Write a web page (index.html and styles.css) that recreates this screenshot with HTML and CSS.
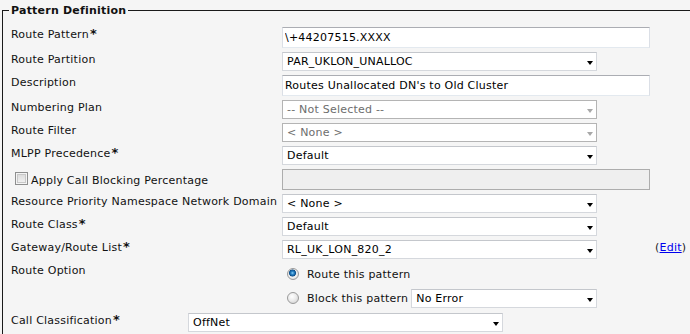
FILE: index.html
```html
<!DOCTYPE html>
<html lang="en">
<head>
<meta charset="utf-8">
<title>Pattern Definition</title>
<link rel="stylesheet" href="styles.css">
</head>
<body>
<fieldset class="panel">
  <legend class="legend">Pattern Definition</legend>
  <div class="form">
    <div class="row row-tall">
      <div class="lbl">Route Pattern<span class="req">*</span></div>
      <div class="ctl"><input class="text" type="text" value="\+44207515.XXXX"></div>
    </div>
    <div class="row">
      <div class="lbl">Route Partition</div>
      <div class="ctl"><div class="select"><span class="val">PAR_UKLON_UNALLOC</span></div></div>
    </div>
    <div class="row row-tall">
      <div class="lbl">Description</div>
      <div class="ctl"><input class="text" type="text" value="Routes Unallocated DN's to Old Cluster"></div>
    </div>
    <div class="row">
      <div class="lbl">Numbering Plan</div>
      <div class="ctl"><div class="select disabled"><span class="val">-- Not Selected --</span></div></div>
    </div>
    <div class="row">
      <div class="lbl">Route Filter</div>
      <div class="ctl"><div class="select disabled"><span class="val">&lt; None &gt;</span></div></div>
    </div>
    <div class="row">
      <div class="lbl">MLPP Precedence<span class="req">*</span></div>
      <div class="ctl"><div class="select"><span class="val">Default</span></div></div>
    </div>
    <div class="row row-tall">
      <div class="lbl lbl-check"><span class="checkbox"></span>Apply Call Blocking Percentage</div>
      <div class="ctl"><input class="text text-disabled" type="text" value="" disabled></div>
    </div>
    <div class="row">
      <div class="lbl">Resource Priority Namespace Network Domain</div>
      <div class="ctl"><div class="select"><span class="val">&lt; None &gt;</span></div></div>
    </div>
    <div class="row">
      <div class="lbl">Route Class<span class="req">*</span></div>
      <div class="ctl"><div class="select"><span class="val">Default</span></div></div>
    </div>
    <div class="row">
      <div class="lbl">Gateway/Route List<span class="req">*</span></div>
      <div class="ctl"><div class="select"><span class="val">RL_UK_LON_820_2</span></div></div>
      <div class="extra">(<a class="link" href="#">Edit</a>)</div>
    </div>
    <div class="row">
      <div class="lbl">Route Option</div>
      <div class="ctl">
        <div class="opt"><span class="radio on"></span><span class="opt-text">Route this pattern</span></div>
        <div class="opt opt-second"><span class="radio"></span><span class="opt-text">Block this pattern</span><div class="select select-small"><span class="val">No Error</span></div></div>
      </div>
    </div>
  </div>
  <div class="form-cc">
    <div class="lbl">Call Classification<span class="req">*</span></div>
    <div class="ctl"><div class="select select-cc"><span class="val">OffNet</span></div></div>
  </div>
</fieldset>
</body>
</html>
```

FILE: styles.css
```css
html, body {
  margin: 0;
  padding: 0;
  background: #f5f5f5;
  overflow: hidden;
}

body {
  font-family: "DejaVu Sans", Verdana, sans-serif;
  font-size: 11px;
  letter-spacing: 0.22px;
  color: #111;
  width: 690px;
  height: 334px;
}

.panel {
  margin: 4px 0 0 2px;
  padding: 8px 0 20px 8px;
  border: 1px solid #1a1a1a;
  width: 800px;
  min-width: 0;
  box-sizing: border-box;
}

.legend {
  font-weight: bold;
  font-size: 11px;
  line-height: 13px;
  padding: 0 2px;
  margin-left: -2px;
  color: #111;
}

.row {
  display: grid;
  grid-template-columns: 271px 373px auto;
  padding: 2px 0;
  align-items: start;
}

.lbl {
  line-height: 16px;
  white-space: nowrap;
}

.req {
  font-size: 13px;
  font-weight: bold;
  line-height: 0;
  margin-left: 1px;
}

.lbl-check {
  padding-top: 3px;
}

.checkbox {
  display: inline-block;
  width: 13px;
  height: 13px;
  box-sizing: border-box;
  border: 1px solid #8e8f8f;
  background: linear-gradient(#d8d8d8, #f4f4f4);
  box-shadow: inset 0 0 0 1px #f4f4f4, inset 0 0 0 2px #c8c8c8;
  margin: 0 3px 0 4px;
  vertical-align: -1px;
}

.text {
  display: block;
  box-sizing: border-box;
  width: 368px;
  height: 21px;
  margin: 0;
  padding: 0 2px;
  font-family: "DejaVu Sans", Verdana, sans-serif;
  font-size: 11px;
  letter-spacing: 0.22px;
  color: #000;
  background: #fff;
  border: 1px solid #dbdfe6;
  border-top-color: #abadb3;
  border-bottom-color: #e3e9ef;
  outline: none;
}

.text-disabled {
  background: #efefef;
  border: 1px solid #adadad;
}

.select {
  display: flex;
  align-items: center;
  box-sizing: border-box;
  width: 315px;
  height: 19px;
  padding-left: 4px;
  background: #fff;
  border: 1px solid #d5d8dd;
  border-top-color: #c4c7cc;
  color: #000;
  white-space: nowrap;
}

.select::after {
  content: "";
  margin-left: auto;
  margin-right: 3px;
  margin-top: 3px;
  border-left: 3.5px solid transparent;
  border-right: 3.5px solid transparent;
  border-top: 4px solid #000;
}

.select.disabled {
  color: #6d6d6d;
  border-color: #b4b4b4;
}

.select.disabled::after {
  border-top-color: #a8a8a8;
}

.extra {
  line-height: 16px;
  padding-left: 0;
  color: #222;
}

.link {
  color: #0000ee;
  text-decoration: underline;
}

.opt {
  display: flex;
  align-items: center;
  height: 22px;
}

.opt-second {
  margin-top: 2px;
}

.radio {
  display: inline-block;
  box-sizing: border-box;
  width: 12px;
  height: 12px;
  border-radius: 50%;
  border: 1px solid #9a9a9a;
  background: radial-gradient(circle at 40% 35%, #ffffff 0, #ececec 45%, #c9c9c9 100%);
  margin-left: 5px;
  margin-right: 8px;
}

.radio.on {
  background: radial-gradient(circle at 45% 40%, #8fd0f5 0, #2a86c8 1.5px, #0d4f8a 3.2px, #e4e4e4 3.8px, #f2f2f2 4.5px, #c6c6c6 100%);
}

.select-small {
  width: 186px;
  margin-left: 3px;
}

.form-cc {
  display: grid;
  grid-template-columns: 177px auto;
  padding: 2px 0;
  align-items: start;
}

.select-cc {
  width: 315px;
}
```
